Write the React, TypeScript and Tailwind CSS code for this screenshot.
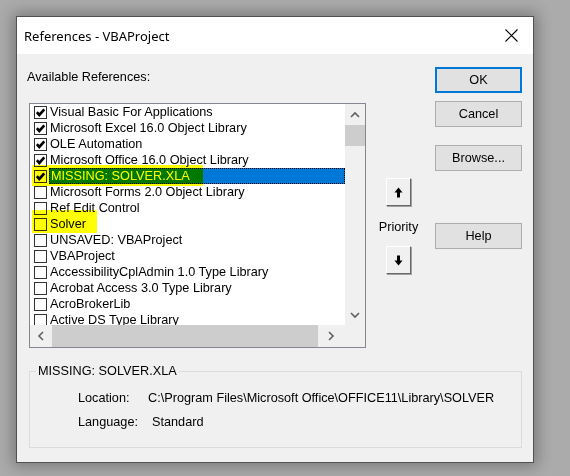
import React from 'react';

const rows = [
  { label: 'Visual Basic For Applications', checked: true },
  { label: 'Microsoft Excel 16.0 Object Library', checked: true },
  { label: 'OLE Automation', checked: true },
  { label: 'Microsoft Office 16.0 Object Library', checked: true },
  { label: 'MISSING: SOLVER.XLA', checked: true, selected: true },
  { label: 'Microsoft Forms 2.0 Object Library', checked: false },
  { label: 'Ref Edit Control', checked: false },
  { label: 'Solver', checked: false },
  { label: 'UNSAVED: VBAProject', checked: false },
  { label: 'VBAProject', checked: false },
  { label: 'AccessibilityCplAdmin 1.0 Type Library', checked: false },
  { label: 'Acrobat Access 3.0 Type Library', checked: false },
  { label: 'AcroBrokerLib', checked: false },
  { label: 'Active DS Type Library', checked: false },
];

function Check() {
  return (
    <svg width="9" height="9" viewBox="0 0 9 9">
      <path d="M0.8 4.2 L3.3 6.9 L8.3 1.3" fill="none" stroke="#000" strokeWidth="2.7" />
    </svg>
  );
}

function Chevron({ dir }: { dir: 'up' | 'down' | 'left' | 'right' }) {
  const d = {
    up: 'M1 7 L5 3 L9 7',
    down: 'M1 3 L5 7 L9 3',
    left: 'M7 1 L3 5 L7 9',
    right: 'M3 1 L7 5 L3 9',
  }[dir];
  return (
    <svg width="10" height="10" viewBox="0 0 10 10">
      <path d={d} fill="none" stroke="#606060" strokeWidth="1.6" />
    </svg>
  );
}

function Arrow({ up }: { up?: boolean }) {
  return (
    <svg width="9" height="11" viewBox="0 0 9 11" className={up ? '' : 'rotate-180'}>
      <path d="M4.5 0.5 L8.5 5.5 L6 5.5 L6 10.5 L3 10.5 L3 5.5 L0.5 5.5 Z" fill="#000" />
    </svg>
  );
}

function Button({ children, primary }: { children: React.ReactNode; primary?: boolean }) {
  return (
    <div
      className={`w-[87px] h-[26px] flex items-center justify-center bg-[#e1e1e1] ${
        primary ? 'border-2 border-[#0078d7]' : 'border border-[#adadad]'
      }`}
    >
      {children}
    </div>
  );
}

export default function App() {
  return (
    <div
      className="w-[570px] h-[476px] bg-[#ababab] pl-[16px] pt-[16px] overflow-hidden text-[12.7px] leading-[14px] text-black"
      style={{ fontFamily: '"Liberation Sans", Arial, sans-serif' }}
    >
      <div className="w-[518px] h-[447px] border border-[#525252] bg-[#f0f0f0] flex flex-col shadow-[0_0_14px_3px_rgba(0,0,0,0.3)]">
        {/* title bar */}
        <div className="h-[37px] bg-white flex items-center justify-between pl-[7px] pr-[15px] shrink-0">
          <span className="text-[13px]" style={{ fontFamily: '"Noto Sans", "Open Sans", sans-serif' }}>
            References - VBAProject
          </span>
          <svg width="13" height="13" viewBox="0 0 13 13">
            <path d="M0.5 0.5 L12.5 12.5 M12.5 0.5 L0.5 12.5" stroke="#000" strokeWidth="1.1" />
          </svg>
        </div>

        {/* body */}
        <div className="flex items-start pl-[10px]">
          {/* list column */}
          <div className="flex flex-col">
            <div className="mt-[16px] h-[14px]">Available References:</div>
            <div className="mt-[19px] ml-[2px] w-[337px] h-[245px] border border-[#828790] bg-white flex flex-col">
              <div className="flex h-[221px]">
                <div className="relative w-[315px] h-[221px] overflow-hidden">
                  {rows.map((r) => (
                    <div key={r.label} className="h-[16px] flex items-center pl-[4px] whitespace-nowrap">
                      <div className="w-[13px] h-[13px] border border-[#333] bg-white flex items-center justify-center shrink-0">
                        {r.checked && <Check />}
                      </div>
                      {r.selected ? (
                        <div className="ml-[2px] flex-1 h-[16px] bg-[#0078d7] text-white border border-dotted border-black flex items-center pl-[1px]">
                          {r.label}
                        </div>
                      ) : (
                        <span className="ml-[3px]">{r.label}</span>
                      )}
                    </div>
                  ))}
                  {/* highlighter annotations */}
                  <div className="absolute left-[2px] top-[61px] w-[171px] h-[21px] bg-[#ffff00] mix-blend-multiply" />
                  <div className="absolute left-[2px] top-[106px] w-[65px] h-[23px] bg-[#ffff00] mix-blend-multiply" />
                </div>
                {/* vertical scrollbar */}
                <div className="w-[20px] h-[221px] bg-[#f0f0f0] flex flex-col items-center">
                  <div className="h-[21px] flex items-center justify-center">
                    <Chevron dir="up" />
                  </div>
                  <div className="w-[20px] h-[21px] bg-[#cdcdcd]" />
                  <div className="flex-1" />
                  <div className="h-[21px] flex items-center justify-center">
                    <Chevron dir="down" />
                  </div>
                </div>
              </div>
              {/* horizontal scrollbar */}
              <div className="flex h-[22px] bg-[#f0f0f0]">
                <div className="w-[22px] flex items-center justify-center">
                  <Chevron dir="left" />
                </div>
                <div className="w-[266px] h-[22px] bg-[#cdcdcd]" />
                <div className="flex-1 flex items-center justify-center pr-[1px]">
                  <Chevron dir="right" />
                </div>
                <div className="w-[20px]" />
              </div>
            </div>
          </div>

          {/* priority column */}
          <div className="ml-[20px] w-[25px] flex flex-col items-center">
            <div className="mt-[124px] w-[25px] h-[28px] bg-[#f0f0f0] border border-t-white border-l-white border-b-[#696969] border-r-[#696969] flex items-center justify-center shadow-[1px_1px_0_#a0a0a0]">
              <Arrow up />
            </div>
            <div className="mt-[14px] h-[14px] whitespace-nowrap flex justify-center w-[25px]">Priority</div>
            <div className="mt-[12px] w-[25px] h-[28px] bg-[#f0f0f0] border border-t-white border-l-white border-b-[#696969] border-r-[#696969] flex items-center justify-center shadow-[1px_1px_0_#a0a0a0]">
              <Arrow />
            </div>
          </div>

          {/* buttons column */}
          <div className="ml-[24px] flex flex-col">
            <div className="mt-[13px]">
              <Button primary>OK</Button>
            </div>
            <div className="mt-[8px]">
              <Button>Cancel</Button>
            </div>
            <div className="mt-[18px]">
              <Button>Browse...</Button>
            </div>
            <div className="mt-[52px]">
              <Button>Help</Button>
            </div>
          </div>
        </div>

        {/* group box */}
        <fieldset className="ml-[12px] mt-[16px] w-[493px] h-[84px] border border-[#dcdcdc] p-0 m-0">
          <legend className="ml-[6px] px-[2px] leading-[14px]">MISSING: SOLVER.XLA</legend>
          <div className="pl-[48px] mt-[13px] flex h-[14px]">
            <span className="w-[70px]">Location:</span>
            <span>C:\Program Files\Microsoft Office\OFFICE11\Library\SOLVER</span>
          </div>
          <div className="pl-[48px] mt-[10px] flex h-[14px]">
            <span className="w-[74px]">Language:</span>
            <span>Standard</span>
          </div>
        </fieldset>
      </div>
    </div>
  );
}
